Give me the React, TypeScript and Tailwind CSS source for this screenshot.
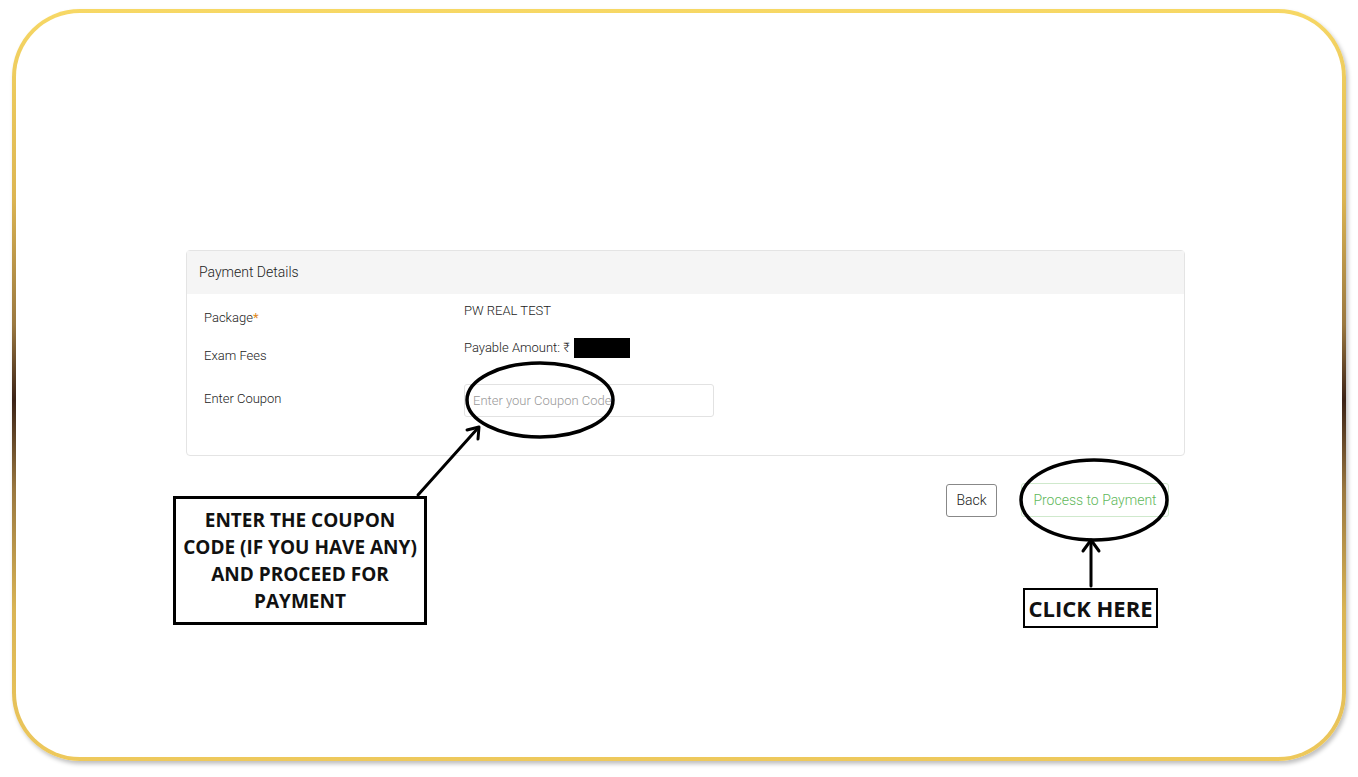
import React from "react";

function Annotations() {
  return (
    <svg
      className="pointer-events-none absolute left-0 top-0 h-[777px] w-[1358px]"
      viewBox="0 0 1358 777"
      fill="none"
      stroke="#000"
      strokeLinecap="round"
      strokeLinejoin="round"
    >
      <ellipse cx="540" cy="400" rx="73" ry="37" strokeWidth="3.5" />
      <ellipse cx="1094" cy="500" rx="73" ry="40" strokeWidth="3.5" />
      <line x1="418" y1="495" x2="478" y2="428" strokeWidth="3" />
      <polyline points="467,430 479,427 478,439" strokeWidth="3" />
      <line x1="1091" y1="586" x2="1091" y2="542" strokeWidth="3" />
      <polyline points="1083,551 1091,540 1099,551" strokeWidth="3" />
    </svg>
  );
}

export default function App() {
  return (
    <div className="relative h-[777px] w-full overflow-hidden bg-white font-['Roboto',sans-serif]">
      <div className="pl-[12px] pt-[9px]">
        <div className="h-[752px] w-[1334px] rounded-[68px] bg-[linear-gradient(to_bottom,#f7d865_0%,#dcb552_25%,#9a7840_42%,#3b2216_52%,#9a7840_64%,#d9b455_80%,#eec95c_100%)] p-[4px] shadow-[2px_3px_4px_rgba(0,0,0,0.25)]">
          <div className="h-full w-full rounded-[64px] bg-white pl-[170px] pt-[237px]">
            <div className="w-[999px]">
              <div className="rounded-[4px] border border-[#e4e4e4]">
                <div className="flex h-[43px] items-center bg-[#f5f5f5] px-[12px] text-[14px] font-light text-[#222]">
                  Payment Details
                </div>
                <div className="pb-[38px] pl-[17px] pt-[8px] text-[13px] font-light leading-[18px] text-[#222]">
                  <div className="flex h-[36px]">
                    <div className="w-[260px] pt-[7px]">
                      Package<span className="font-normal text-[#e08a1e]">*</span>
                    </div>
                    <div>PW REAL TEST</div>
                  </div>
                  <div className="flex h-[46px]">
                    <div className="w-[260px] pt-[9px]">Exam Fees</div>
                    <div className="flex h-[20px] items-center">
                      Payable Amount: ₹
                      <span className="ml-[4px] h-[20px] w-[56px] bg-black" />
                    </div>
                  </div>
                  <div className="flex h-[33px]">
                    <div className="w-[260px] pt-[6px]">Enter Coupon</div>
                    <input
                      className="h-[33px] w-[250px] rounded-[3px] border border-[#e2e2e2] px-[8px] text-[13px] font-light outline-none placeholder:text-[#999]"
                      placeholder="Enter your Coupon Code."
                    />
                  </div>
                </div>
              </div>

              <div className="flex justify-between">
                <div className="-ml-[13px] mt-[40px] flex h-[129px] w-[254px] items-center justify-center border-[3px] border-black text-center font-['Open_Sans',sans-serif] text-[19px] font-bold leading-[27px] text-[#111]">
                  ENTER THE COUPON
                  <br />
                  CODE (IF YOU HAVE ANY)
                  <br />
                  AND PROCEED FOR
                  <br />
                  PAYMENT
                </div>
                <div className="mr-[16px] mt-[27px] flex flex-col items-end">
                  <div className="flex items-center gap-[24px]">
                    <button className="h-[33px] w-[51px] rounded-[3px] border border-[#888] text-[14px] font-light text-[#222]">
                      Back
                    </button>
                    <button className="h-[34px] w-[148px] rounded-[3px] border border-[#cfe9cc] text-[14px] font-light text-[#5fb85b]">
                      Process to Payment
                    </button>
                  </div>
                  <div className="mr-[11px] mt-[71px] flex h-[40px] w-[135px] items-center justify-center border-2 border-black font-['Open_Sans',sans-serif] text-[22px] font-bold text-[#111]">
                    CLICK HERE
                  </div>
                </div>
              </div>
            </div>
          </div>
        </div>
      </div>
      <Annotations />
    </div>
  );
}
